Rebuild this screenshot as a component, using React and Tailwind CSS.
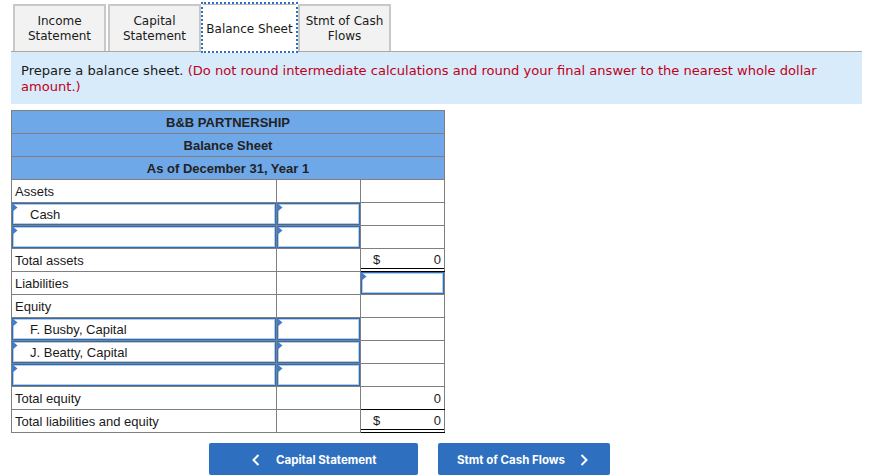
import React from "react";

const Tab = ({ children, w, active }) =>
  active ? (
    <div className={`-mb-[1px] -mt-[2px] flex h-[51px] ${w} z-10 items-center justify-center border-2 border-dotted border-[#2f6fc0] bg-white pt-[3px] text-center leading-[15px] shadow-[inset_0_1px_0_0_#b8b8b8]`}>
      {children}
    </div>
  ) : (
    <div className={`flex h-[47px] ${w} items-center justify-center border-2 border-b-0 border-[#c8c8c8] bg-[#f2f2f2] text-center leading-[15px]`}>
      {children}
    </div>
  );

const Marker = () => (
  <svg className="absolute left-[-1px] top-[-1px]" width="6" height="9" viewBox="0 0 6 9">
    <path d="M0 0 L5.5 4.5 L0 9 Z" fill="#3f7ccb" />
  </svg>
);

const Input = ({ children, indent }) => (
  <div className={`relative h-[22px] border border-[#2f6db5] bg-white pt-[2px] leading-[18px] shadow-[inset_0_0_0_1px_rgba(47,109,181,0.35)] ${indent ? "pl-[17px]" : ""}`}>
    <Marker />
    {children}
  </div>
);

const cell = "border border-[#808080] h-[23px] p-0 align-middle";

const Label = ({ children }) => <td className={`${cell} pl-[3px] pt-[1px]`}>{children}</td>;
const InCell = ({ children, indent }) => (
  <td className={cell}>
    <Input indent={indent}>{children}</Input>
  </td>
);
const Empty = () => <td className={cell}></td>;

const Money = ({ sign, value, double }) => (
  <td className={`${cell} border-b-black ${double ? "shadow-[inset_0_-2px_0_0_white,inset_0_-3px_0_0_black]" : "pt-[2px]"}`}>
    <div className="flex items-center justify-between pl-[12px] pr-[3px]">
      <span>{sign}</span>
      <span>{value}</span>
    </div>
  </td>
);

const Head = ({ children }) => (
  <tr>
    <td colSpan={3} className={`${cell} bg-[#6fa8e8] pt-[1px] text-center font-bold text-[#222]`}>
      {children}
    </td>
  </tr>
);

export default function App() {
  return (
    <div className="h-[475px] w-[871px] overflow-hidden bg-white text-[#1a1a1a]">
      <div className="ml-[11px] w-[851px] pt-[4px]">
        <div className="flex h-[48px] border-b border-[#a8a8a8] pl-[2px] font-['DejaVu_Sans',sans-serif] text-[12px]">
          <Tab w="w-[93px]">Income<br />Statement</Tab>
          <div className="w-[2px]" />
          <Tab w="w-[93px]">Capital<br />Statement</Tab>
          <Tab w="w-[97px]" active>Balance Sheet</Tab>
          <Tab w="w-[93px]">Stmt of Cash<br />Flows</Tab>
        </div>
        <div className="h-[52px] bg-[#d7ebfa] px-[10px] pt-[11px] font-['DejaVu_Sans',sans-serif] text-[13.07px] leading-[16px]">
          Prepare a balance sheet. <span className="text-[#c00020]">(Do not round intermediate calculations and round your final answer to the nearest whole dollar amount.)</span>
        </div>
      </div>

      <table className="ml-[11px] mt-[6px] w-[434px] table-fixed border-collapse font-['Liberation_Sans',Arial,sans-serif] text-[13px] leading-[14px]">
        <colgroup>
          <col className="w-[265px]" />
          <col className="w-[84px]" />
          <col className="w-[84px]" />
        </colgroup>
        <tbody>
          <Head>B&amp;B PARTNERSHIP</Head>
          <Head>Balance Sheet</Head>
          <Head>As of December 31, Year 1</Head>
          <tr><Label>Assets</Label><Empty /><Empty /></tr>
          <tr><InCell indent>Cash</InCell><InCell /><Empty /></tr>
          <tr><InCell /><InCell /><Empty /></tr>
          <tr><Label>Total assets</Label><Empty /><Money sign="$" value="0" double /></tr>
          <tr><Label>Liabilities</Label><Empty /><InCell /></tr>
          <tr><Label>Equity</Label><Empty /><Empty /></tr>
          <tr><InCell indent>F. Busby, Capital</InCell><InCell /><Empty /></tr>
          <tr><InCell indent>J. Beatty, Capital</InCell><InCell /><Empty /></tr>
          <tr><InCell /><InCell /><Empty /></tr>
          <tr><Label>Total equity</Label><Empty /><Money value="0" /></tr>
          <tr><Label>Total liabilities and equity</Label><Empty /><Money sign="$" value="0" double /></tr>
        </tbody>
      </table>

      <div className="ml-[209px] mt-[10px] flex gap-[20px] font-['Inter',sans-serif] text-[11.5px] font-bold text-white">
        <div className="flex h-[32px] w-[209px] items-center rounded-[2px] bg-[#2f6fc0] pl-[43px] pt-[1px]">
          <svg width="8" height="12" viewBox="0 0 8 12" fill="none" stroke="white" strokeWidth="2"><path d="M6.5 1 L1.5 6 L6.5 11" /></svg>
          <span className="ml-[16px] pt-[2px]">Capital Statement</span>
        </div>
        <div className="flex h-[32px] w-[172px] items-center rounded-[2px] bg-[#2f6fc0] pl-[19px] pt-[1px]">
          <span className="pt-[2px]">Stmt of Cash Flows</span>
          <svg className="ml-[15px]" width="8" height="12" viewBox="0 0 8 12" fill="none" stroke="white" strokeWidth="2"><path d="M1.5 1 L6.5 6 L1.5 11" /></svg>
        </div>
      </div>
    </div>
  );
}
